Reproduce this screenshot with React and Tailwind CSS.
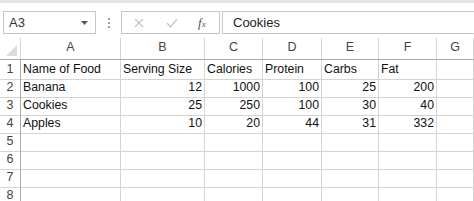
const cols = ['A', 'B', 'C', 'D', 'E', 'F', 'G'];

const rows = [
  ['Name of Food', 'Serving Size', 'Calories', 'Protein', 'Carbs', 'Fat', ''],
  ['Banana', 12, 1000, 100, 25, 200, ''],
  ['Cookies', 25, 250, 100, 30, 40, ''],
  ['Apples', 10, 20, 44, 31, 332, ''],
  ['', '', '', '', '', '', ''],
  ['', '', '', '', '', '', ''],
  ['', '', '', '', '', '', ''],
  ['', '', '', '', '', '', ''],
];

const gridCols = 'grid grid-cols-[21px_100px_84px_58px_59px_57px_58px_1fr]';

function FormulaBar() {
  return (
    <div className="mt-[8px] flex h-[23px] pl-[3px]">
      {/* Name box */}
      <div className="flex w-[93px] items-center justify-between border border-[#c6c6c6] pl-[5px] pr-[7px] text-[13px] text-[#333]">
        <span>A3</span>
        <svg width="7" height="4" viewBox="0 0 7 4">
          <polygon points="0,0 7,0 3.5,4" fill="#555" />
        </svg>
      </div>
      <div className="flex w-[25px] flex-col items-center justify-center gap-[2px]">
        <span className="h-[2px] w-[2px] bg-[#a0a0a0]" />
        <span className="h-[2px] w-[2px] bg-[#a0a0a0]" />
        <span className="h-[2px] w-[2px] bg-[#a0a0a0]" />
      </div>
      {/* Cancel / enter / fx */}
      <div className="flex w-[99px] items-center border border-[#c6c6c6]">
        <svg className="ml-[12px]" width="10" height="10" viewBox="0 0 10 10">
          <path d="M1 1 L9 9 M9 1 L1 9" stroke="#c4c4c4" strokeWidth="1.2" fill="none" />
        </svg>
        <svg className="ml-[22px]" width="12" height="10" viewBox="0 0 12 10">
          <path d="M1 5 L4.5 9 L11 1" stroke="#c4c4c4" strokeWidth="1.2" fill="none" />
        </svg>
        <span className="ml-[20px] font-['Liberation_Serif',serif] text-[13px] italic text-[#555]">
          f<span className="text-[9px]">x</span>
        </span>
      </div>
      <div className="ml-[2px] flex flex-1 items-center border border-r-0 border-[#c6c6c6] pl-[10px] text-[13px] text-[#222]">
        Cookies
      </div>
    </div>
  );
}

function Sheet() {
  return (
    <div className="mt-[4px]">
      <div className={`${gridCols} h-[22px] border-b border-[#ababab]`}>
        <div className="relative border-r border-[#d4d4d4]">
          <svg className="absolute bottom-[3px] right-[3px]" width="11" height="11" viewBox="0 0 11 11">
            <polygon points="11,0 11,11 0,11" fill="#dcdcdc" />
          </svg>
        </div>
        {cols.map((c) => (
          <div
            key={c}
            className="flex items-end justify-center border-r border-[#d4d4d4] pb-[2px] text-[12.5px] text-[#444]"
          >
            {c}
          </div>
        ))}
      </div>
      {rows.map((r, i) => (
        <div key={i} className={`${gridCols} h-[18px]`}>
          <div className="flex items-center justify-center border-r border-b border-[#ababab] border-b-[#d4d4d4] text-[12.5px] text-[#444]">
            {i + 1}
          </div>
          {r.map((v, j) => (
            <div
              key={j}
              className={
                'flex items-center overflow-visible whitespace-nowrap border-r border-b border-[#d4d4d4] text-[12.3px] text-[#111] ' +
                (typeof v === 'number' ? 'justify-end pr-[2px]' : 'pl-[2px]')
              }
            >
              {v}
            </div>
          ))}
        </div>
      ))}
    </div>
  );
}

export default function App() {
  return (
    <div className="h-[201px] w-[474px] overflow-hidden bg-white font-['Liberation_Sans',Arial,sans-serif]">
      <div className="h-[3px] bg-[#e6e6e6]" />
      <FormulaBar />
      <Sheet />
    </div>
  );
}
